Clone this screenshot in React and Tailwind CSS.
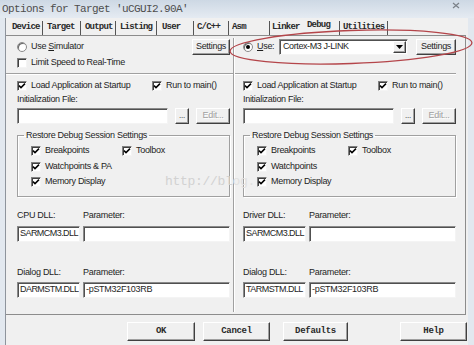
import React from "react";

const SANS = "font-['Liberation_Sans',Arial,sans-serif] text-[9px] tracking-[-0.3px] text-[#1e1e1e]";
const MONO = "font-['Liberation_Mono',monospace]";

function Check({ checked = true }) {
  return (
    <span className="w-[10px] h-[10px] shrink-0 bg-white border border-t-[#808080] border-l-[#808080] border-r-[#f4f4f4] border-b-[#f4f4f4] shadow-[inset_1px_1px_0_#404040] flex items-center justify-center">
      {checked && (
        <svg width="8" height="8" viewBox="0 0 8 8">
          <path d="M1 3.6 L3 5.6 L7 1.6" fill="none" stroke="#000" strokeWidth="1.5" />
        </svg>
      )}
    </span>
  );
}

function Radio({ selected }) {
  return (
    <span className="w-[10px] h-[10px] shrink-0 rounded-full bg-white border border-[#8a8a8a] shadow-[inset_1px_1px_0_#666] flex items-center justify-center">
      {selected && <span className="w-[4px] h-[4px] rounded-full bg-black" />}
    </span>
  );
}

function Btn({ className = "", children, disabled }) {
  return (
    <div
      className={
        "flex items-center justify-center bg-[#f0f0f0] border border-t-white border-l-white border-r-[#404040] border-b-[#404040] shadow-[inset_-1px_-1px_0_#a0a0a0] " +
        (disabled ? "text-[#a0a0a0] [text-shadow:1px_1px_0_#fff] " : "") +
        className
      }
    >
      {children}
    </div>
  );
}

function Input({ className = "", children }) {
  return (
    <div
      className={
        "bg-white border border-t-[#8a8a8a] border-l-[#8a8a8a] border-r-[#f4f4f4] border-b-[#f4f4f4] shadow-[inset_1px_1px_0_#505050] flex items-center pl-[2px] overflow-hidden whitespace-nowrap " +
        className
      }
    >
      {children}
    </div>
  );
}

function Column({ right }) {
  return (
    <div className={"flex flex-col " + (right ? "flex-1 pl-[8px] pr-[9px]" : "w-[227px] pl-[11px] pr-[3px]")}>
      <div className="mt-[3px] h-[16px] flex items-center">
        {right ? (
          <>
            <Radio selected />
            <span className="ml-[4px] w-[22px]">
              <span className="underline">U</span>se:
            </span>
            <Input className="w-[129px] h-[16px] relative pr-0">
              <span className="flex-1 pl-[1px] tracking-[-0.4px]">Cortex-M3 J-LINK</span>
              <Btn className="w-[13px] h-[12px] mr-[1px]">
                <svg width="7" height="4" viewBox="0 0 7 4">
                  <path d="M0 0 H7 L3.5 4 Z" fill="#000" />
                </svg>
              </Btn>
            </Input>
            <Btn className="ml-auto w-[40px] h-[16px]">Settings</Btn>
          </>
        ) : (
          <>
            <Radio />
            <span className="ml-[4px]">
              Use <span className="underline">S</span>imulator
            </span>
            <Btn className="ml-auto w-[38px] h-[16px]">Settings</Btn>
          </>
        )}
      </div>
      <div className="mt-[1px] h-[13px] flex items-center">
        {!right && (
          <>
            <Check checked={false} />
            <span className="ml-[4px]">Limit Speed to Real-Time</span>
          </>
        )}
      </div>
      <div
        className={
          "mt-[4px] h-[2px] border-t border-t-[#a0a0a0] border-b border-b-white " +
          (right ? "-ml-[8px]" : "-ml-[11px] -mr-[3px]")
        }
      />
      <div className="mt-[5px] h-[12px] flex items-center">
        <div className="w-[135px] flex items-center">
          <Check />
          <span className="ml-[4px]">Load Application at Startup</span>
        </div>
        <Check />
        <span className="ml-[4px]">Run to main()</span>
      </div>
      <div className="mt-[2px] h-[12px] flex items-center">Initialization File:</div>
      <div className="mt-[2px] h-[16px] flex">
        <Input className="w-[151px] h-[16px]" />
        <Btn className="ml-[7px] w-[14px] h-[16px] text-[8px]">...</Btn>
        <Btn className="ml-[7px] flex-1 h-[16px]" disabled>
          Edit...
        </Btn>
      </div>
      <fieldset className="mt-[6px] border border-[#a0a0a0] shadow-[1px_1px_0_#fff,inset_1px_1px_0_#fff] pb-[8px]">
        <legend className="ml-[6px] px-[2px] h-[10px] leading-[10px]">Restore Debug Session Settings</legend>
        <div className="pl-[13px]">
          <div className="mt-[5px] h-[12px] flex items-center">
            <div className="w-[91px] flex items-center">
              <Check />
              <span className="ml-[4px]">Breakpoints</span>
            </div>
            <Check />
            <span className="ml-[4px]">Toolbox</span>
          </div>
          <div className="mt-[4px] h-[12px] flex items-center">
            <Check />
            <span className="ml-[4px]">{right ? "Watchpoints" : "Watchpoints & PA"}</span>
          </div>
          <div className="mt-[3px] h-[12px] flex items-center">
            <Check />
            <span className="ml-[4px]">Memory Display</span>
          </div>
        </div>
      </fieldset>
      <div className="mt-[13px] h-[12px] flex items-center">
        <span className="w-[66px]">{right ? "Driver DLL:" : "CPU DLL:"}</span>
        <span>Parameter:</span>
      </div>
      <div className="mt-[4px] h-[16px] flex gap-[3px]">
        <Input className="w-[63px] h-[16px] pl-[1px] tracking-[-0.55px]">SARMCM3.DLL</Input>
        <Input className="flex-1 h-[16px]" />
      </div>
      <div className="mt-[25px] h-[12px] flex items-center">
        <span className="w-[66px]">Dialog DLL:</span>
        <span>Parameter:</span>
      </div>
      <div className="mt-[3px] h-[16px] flex gap-[3px]">
        <Input className="w-[63px] h-[16px] pl-[1px] tracking-[-0.55px]">{right ? "TARMSTM.DLL" : "DARMSTM.DLL"}</Input>
        <Input className="flex-1 h-[16px]">-pSTM32F103RB</Input>
      </div>
    </div>
  );
}

const tabs = [
  { t: "Device", w: 37, pl: 6, b: true },
  { t: "Target", w: 38, pl: 4, b: true },
  { t: "Output", w: 35, pl: 4, b: true },
  { t: "Listing", w: 41, pl: 4, b: true },
  { t: "User", w: 37, pl: 5, b: true },
  { t: "C/C++", w: 35, pl: 3, b: true },
  { t: "Asm", w: 41, pl: 3, b: true },
  { t: "Linker", w: 34, pl: 2, b: false },
  { t: "Debug", w: 36, pl: 3, b: true, sel: true },
  { t: "Utilities", w: 48, pl: 3, b: true },
];

export default function App() {
  return (
    <div className={"relative w-[474px] h-[345px] overflow-hidden bg-[#e2e8ef] flex flex-col " + SANS}>
      <div className="h-[18px] shrink-0 flex items-center pl-[2px] bg-gradient-to-b from-[#cdd8e4] to-[#e5ebf2]">
        <span className={MONO + " text-[11px] tracking-[-0.6px] text-[#4e4e4e]"}>
          Options for Target 'uCGUI2.90A'
        </span>
        <svg className="ml-auto mr-[14px] -mt-[8px]" width="8" height="7" viewBox="0 0 8 7">
          <path d="M1 1 L7 6 M7 1 L1 6" stroke="#7a8088" strokeWidth="1.2" />
        </svg>
      </div>
      <div className="flex-1 ml-[5px] w-[463px] bg-[#f0f0f0] border-l border-[#8e949c] flex flex-col">
        <div className="h-[17px] flex items-start">
          {tabs.map((tab) => (
            <div
              key={tab.t}
              className={
                "h-[14px] mt-[3px] flex items-center font-bold text-[9px] tracking-[-0.8px] text-[#2a2a2a] " +
                MONO +
                (tab.b ? " border-r border-[#555]" : "")
              }
              style={{ width: tab.w, paddingLeft: tab.pl }}
            >
              <span className={tab.sel ? "-mt-[4px]" : ""}>{tab.t}</span>
            </div>
          ))}
        </div>
        <div className="h-[280px] w-[460px] border-t border-r border-b border-[#8c8c8c] flex">
          <Column />
          <div className="w-[2px] my-[2px] border-l border-[#a0a0a0] bg-white" />
          <Column right />
        </div>
        <div className={"mt-[7px] h-[19px] flex font-bold text-[9px] text-[#2a2a2a] " + MONO}>
          <Btn className="ml-[121px] w-[68px] h-[19px]">OK</Btn>
          <Btn className="ml-[8px] w-[67px] h-[19px]">Cancel</Btn>
          <Btn className="ml-[13px] w-[65px] h-[19px]">Defaults</Btn>
          <Btn className="ml-[52px] w-[67px] h-[19px]">Help</Btn>
        </div>
      </div>
      <div className={"absolute left-[165px] top-[172px] text-[13px] text-[#d2d2d2] pointer-events-none " + MONO}>
        http://bl<span className="text-[#e0e0e0]">og.</span>
      </div>
      <svg className="absolute left-0 top-0 pointer-events-none" width="474" height="345" viewBox="0 0 474 345">
        <ellipse cx="351" cy="47" rx="121" ry="16.5" transform="rotate(-2 351 47)" fill="none" stroke="#b4454a" strokeWidth="1.3" />
      </svg>
    </div>
  );
}
